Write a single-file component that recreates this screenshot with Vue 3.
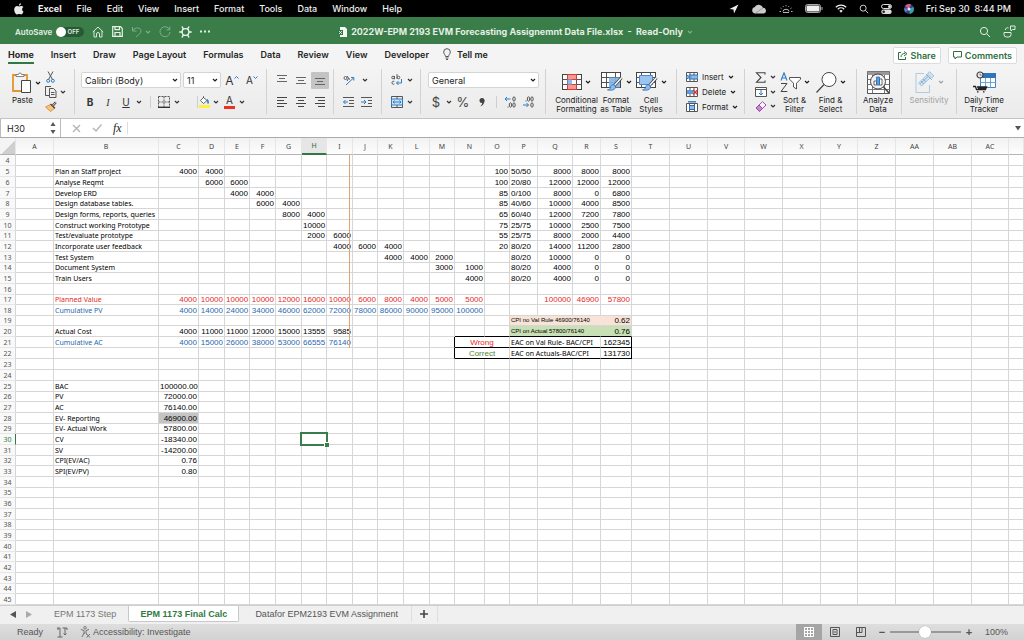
<script setup>
const menus = ['File', 'Edit', 'View', 'Insert', 'Format', 'Tools', 'Data', 'Window', 'Help']
const tabs = ['Home', 'Insert', 'Draw', 'Page Layout', 'Formulas', 'Data', 'Review', 'View', 'Developer']

const columns = [
  ['A', 38], ['B', 105], ['C', 40], ['D', 26], ['E', 25], ['F', 26], ['G', 26], ['H', 25], ['I', 26],
  ['J', 25], ['K', 26], ['L', 26], ['M', 25], ['N', 30], ['O', 25], ['P', 28], ['Q', 35], ['R', 28],
  ['S', 31], ['T', 38], ['U', 38], ['V', 37], ['W', 38], ['X', 38], ['Y', 37], ['Z', 38], ['AA', 38],
  ['AB', 38], ['AC', 37], ['', 0]
].map(([name, width]) => ({ name, width }))

const values = {
  5: { B: 'Plan an Staff project', C: '4000', D: '4000', O: '100', P: '50/50', Q: '8000', R: '8000', S: '8000' },
  6: { B: 'Analyse Reqmt', D: '6000', E: '6000', O: '100', P: '20/80', Q: '12000', R: '12000', S: '12000' },
  7: { B: 'Develop ERD', E: '4000', F: '4000', O: '85', P: '0/100', Q: '8000', R: '0', S: '6800' },
  8: { B: 'Design database tables.', F: '6000', G: '4000', O: '85', P: '40/60', Q: '10000', R: '4000', S: '8500' },
  9: { B: 'Design forms, reports, queries', G: '8000', H: '4000', O: '65', P: '60/40', Q: '12000', R: '7200', S: '7800' },
  10: { B: 'Construct working Prototype', H: '10000', O: '75', P: '25/75', Q: '10000', R: '2500', S: '7500' },
  11: { B: 'Test/evaluate prototype', H: '2000', I: '6000', O: '55', P: '25/75', Q: '8000', R: '2000', S: '4400' },
  12: { B: 'Incorporate user feedback', I: '4000', J: '6000', K: '4000', O: '20', P: '80/20', Q: '14000', R: '11200', S: '2800' },
  13: { B: 'Test System', K: '4000', L: '4000', M: '2000', P: '80/20', Q: '10000', R: '0', S: '0' },
  14: { B: 'Document System', M: '3000', N: '1000', P: '80/20', Q: '4000', R: '0', S: '0' },
  15: { B: 'Train Users', N: '4000', P: '80/20', Q: '4000', R: '0', S: '0' },
  17: { B: 'Planned Value', C: '4000', D: '10000', E: '10000', F: '10000', G: '12000', H: '16000', I: '10000', J: '6000', K: '8000', L: '4000', M: '5000', N: '5000', Q: '100000', R: '46900', S: '57800' },
  18: { B: 'Cumulative PV', C: '4000', D: '14000', E: '24000', F: '34000', G: '46000', H: '62000', I: '72000', J: '78000', K: '86000', L: '90000', M: '95000', N: '100000' },
  19: { P: 'CPI no Val Rule 46900/76140', S: '0.62' },
  20: { B: 'Actual Cost', C: '4000', D: '11000', E: '11000', F: '12000', G: '15000', H: '13555', I: '9585', P: 'CPI on Actual 57800/76140', S: '0.76' },
  21: { B: 'Cumulative AC', C: '4000', D: '15000', E: '26000', F: '38000', G: '53000', H: '66555', I: '76140', N: 'Wrong', P: 'EAC on Val Rule- BAC/CPI', S: '162345' },
  22: { N: 'Correct', P: 'EAC on Actuals-BAC/CPI', S: '131730' },
  25: { B: 'BAC', C: '100000.00' },
  26: { B: 'PV', C: '72000.00' },
  27: { B: 'AC', C: '76140.00' },
  28: { B: 'EV- Reporting', C: '46900.00' },
  29: { B: 'EV- Actual Work', C: '57800.00' },
  30: { B: 'CV', C: '-18340.00' },
  31: { B: 'SV', C: '-14200.00' },
  32: { B: 'CPI(EV/AC)', C: '0.76' },
  33: { B: 'SPI(EV/PV)', C: '0.80' }
}

const spans = {
  19: { P: 3 }, 20: { P: 3 },
  21: { N: 2, P: 3 }, 22: { N: 2, P: 3 }
}
const shortRows = [8, 11, 14, 17, 19, 26, 29, 32, 35, 38, 41, 44]

const rowClass = {
  17: 'red', 18: 'blue', 21: 'boxed', 22: 'boxed', 19: 'peach', 20: 'mint'
}

function cellsOf(n) {
  const out = []
  let i = 0
  while (i < columns.length) {
    const col = columns[i].name
    const span = spans[n]?.[col] ?? 1
    const text = values[n]?.[col] ?? ''
    const verdict = text === 'Wrong' || text === 'Correct'
    const classes = ['c' + (col || 'end')]
    if (text && col !== 'B' && col !== 'P' && !verdict) classes.push('num')
    if (verdict) classes.push('verdict', text.toLowerCase())
    if (n === 21 && i < 9) classes.push('bluecell')
    if (n === 28 && col === 'C') classes.push('shade')
    out.push({ key: col || 'end', text, span, classes })
    i += span
  }
  return out
}

const rows = Array.from({ length: 42 }, (_, k) => {
  const n = k + 4
  return { n, short: shortRows.includes(n), cls: rowClass[n], cells: cellsOf(n) }
})
</script>

<template>
  <div class="app">
    <svg class="defs" aria-hidden="true">
      <symbol id="chev" viewBox="0 0 6 6"><path d="M1 2l2 2 2-2" fill="none" stroke="currentColor" stroke-width="1.2" /></symbol>
      <symbol id="lens" viewBox="0 0 12 12"><circle cx="5" cy="5" r="3.6" fill="none" stroke="currentColor" /><path d="M7.6 7.6L11 11" stroke="currentColor" /></symbol>
      <symbol id="grid" viewBox="0 0 22 18"><rect x=".5" y=".5" width="19" height="15" fill="#fff" stroke="#444" /><path d="M.5 5.500h19M.5 10.500h19M5.500 .5v15M14.500 .5v15" stroke="#555" fill="none" /></symbol>
      <symbol id="brush" viewBox="0 0 16 14"><path d="M14.500 .8L7 9" stroke="#444" stroke-width="3" /><path d="M14.500 .8L7 9" stroke="#fff" stroke-width="1.400" /><path d="M7.500 8c-3-1-4 1-4 3-1 1.500-2 1.800-3 1.800 4 1.200 8 0 8-3z" fill="#8ebcec" stroke="#2a70b8" stroke-width=".8" /></symbol>
    </svg>

    <header class="menubar">
      <svg class="apple" viewBox="0 0 10 12"><path d="M7 .2c.1 1.300-.9 2.400-2.100 2.400C4.800 1.400 5.900.4 7 .2zM9.500 8.700c-.7 1.600-1.500 2.800-2.500 2.800-.7 0-1-.4-1.900-.4s-1.200.4-1.900.4C1.700 11.500.2 8.900.2 6.500.2 4.200 1.700 3 3.100 3c.8 0 1.500.5 2 .5S6.400 3 7.300 3c.9 0 1.600.4 2.100 1.100-1.900 1.200-1.600 3.700.1 4.600z" fill="#e8e8e8" /></svg>
      <nav class="menus"><b>Excel</b><span v-for="m in menus" :key="m">{{ m }}</span></nav>
      <div class="tray">
        <svg width="10" height="10" viewBox="0 0 10 10"><path d="M9.500.5L.5 5l4 .5.5 4z" fill="#eee" /></svg>
        <svg width="16" height="10" viewBox="0 0 16 10"><path d="M4 9.500a3.300 3.300 0 01-.2-6.500A4.500 4.500 0 0112 3.800a2.900 2.900 0 01.8 5.700z" fill="#ccc" /><path d="M4 9.500L12 4" stroke="#888" stroke-width=".7" /></svg>
        <svg width="14" height="8" viewBox="0 0 14 8"><path d="M4 6.500a3 2.200 0 016 0M1.500 3l1 .7M12.500 3l-1 .7M4 1l.5.800M10 1l-.5.800M7 .2v1M.5 6.500h1.500M12 6.500h1.500M4 7.500h6" stroke="#ccc" fill="none" stroke-width=".9" /></svg>
        <svg width="18" height="9" viewBox="0 0 18 9"><rect x=".5" y=".5" width="15" height="8" rx="2" fill="none" stroke="#aaa" /><rect x="1.500" y="1.500" width="13" height="6" rx="1" fill="#eee" /><path d="M17 3v3" stroke="#aaa" /></svg>
        <svg width="12" height="9" viewBox="0 0 12 9"><path d="M.8 3.200a7.500 7.500 0 0110.400 0M2.800 5.200a4.600 4.600 0 016.400 0" fill="none" stroke="#eee" stroke-width="1.300" /><path d="M4.300 6.700L6 8.700l1.700-2a2.600 2.600 0 00-3.400 0z" fill="#eee" /></svg>
        <svg width="10" height="10"><use href="#lens" /></svg>
        <svg width="11" height="10" viewBox="0 0 11 10"><rect x=".5" y=".5" width="10" height="4" rx="2" fill="none" stroke="#ddd" /><circle cx="8.500" cy="2.500" r="1.500" fill="#ddd" /><rect x=".3" y="5.500" width="10.400" height="4.500" rx="2.200" fill="#ddd" /><circle cx="2.700" cy="7.700" r="1.300" fill="#222" /></svg>
        <svg width="10" height="10" viewBox="0 0 10 10"><circle cx="5" cy="5" r="5" fill="#364070" /><path d="M5 5L1 2a5 5 0 016-1.500z" fill="#d25a8a" /><path d="M5 5l4.500-2A5 5 0 016 9.900z" fill="#3aa0a8" /><path d="M5 5L1.500 8.500A5 5 0 01.5 4z" fill="#5878d0" /><circle cx="5" cy="5" r="1.500" fill="#e8e4f4" /></svg>
        <time>Fri Sep 30&nbsp; 8:44 PM</time>
      </div>
    </header>

    <div class="titlebar">
      <div class="quick">
        <label class="auto"><span>AutoSave</span><input type="checkbox" role="switch" /><i>OFF</i></label>
        <button aria-label="Home page"><svg width="12" height="12" viewBox="0 0 12 12"><path d="M.8 6L6 1l5.200 5M2 5v6h2.500V8a1.500 1.500 0 013 0v3H10V5" fill="none" stroke="#d8e8da" /></svg></button>
        <button aria-label="Save"><svg width="11" height="11" viewBox="0 0 11 11"><path d="M.7.7h7.800l1.800 1.800v7.800H.7zM3 .7v3h4.500v-3M3 10.300V6.500h5v3.800" fill="none" stroke="#e8f2e8" stroke-width="1.200" /></svg></button>
        <button class="dim undo" aria-label="Undo"><svg width="12" height="12" viewBox="0 0 12 12"><path d="M1.500 1v4h4M1.800 4.500C4 1 10 1 10 5c0 2.500-3 4-5 6" fill="none" stroke="currentColor" /></svg><svg width="6" height="6"><use href="#chev" /></svg></button>
        <button class="dim" aria-label="Redo"><svg width="12" height="12" viewBox="0 0 12 12"><path d="M10.500 3.500A5 5 0 1011 6M10.800.5v3.300H7.500" fill="none" stroke="currentColor" /></svg></button>
        <button aria-label="Settings"><svg width="13" height="12" viewBox="0 0 13 12"><circle cx="6.500" cy="6" r="3.400" fill="none" stroke="#edf5ed" stroke-width="1.400" /><path d="M3 .5L4.300 3M10 .5L8.700 3M.3 6H3M10 6h2.700M3 11.500L4.300 9M10 11.500L8.700 9" stroke="#edf5ed" stroke-width="1.500" /></svg></button>
        <button aria-label="More"><svg width="10" height="3" viewBox="0 0 10 3"><path d="M0 .5h2v2H0zM4 .5h2v2H4zM8 .5h2v2H8z" fill="#e0eee0" /></svg></button>
      </div>
      <div class="doc">
        <svg width="9" height="10" viewBox="0 0 9 10"><path d="M2 0h5l2 2v8H2z" fill="#f4f8f4" /><rect y="3" width="5" height="5" fill="#2f7a42" /><path d="M1 4l3 3M4 4L1 7" stroke="#fff" stroke-width=".8" /></svg>
        <h1>2022W-EPM 2193 EVM Forecasting Assignemnt Data File.xlsx&nbsp; -&nbsp; Read-Only</h1>
        <svg class="dim" width="6" height="6"><use href="#chev" /></svg>
      </div>
      <div class="quickr">
        <button aria-label="Search"><svg width="12" height="12"><use href="#lens" /></svg></button>
        <button aria-label="Share status"><svg width="13" height="13" viewBox="0 0 13 13"><path d="M1 7.500h7v2a2.500 2.500 0 01-2.500 2.500h-2A2.500 2.500 0 011 9.500zM2.500 5a2 2 0 013-2M7.500 1h4.500v3.500H9.500L8 6V4.500h-.5z" fill="none" stroke="#e0eee0" /></svg></button>
      </div>
    </div>

    <div class="tabrow">
      <nav>
        <button v-for="(t, i) in tabs" :key="t" :class="{ on: i === 0 }">{{ t }}</button>
        <button class="tell"><svg width="8" height="12" viewBox="0 0 8 12"><path d="M2.500 8.500C2.500 7 .7 6 .7 4a3.300 3.300 0 016.600 0c0 2-1.800 3-1.800 4.500zM2.500 10h3M3 11.500h2" fill="none" stroke="#444" stroke-width=".9" /></svg>Tell me</button>
      </nav>
      <div class="actions">
        <button><svg width="10" height="9" viewBox="0 0 10 9"><path d="M3 1.500H.5v7h7V6M3 6c0-2.500 1.500-3.500 4-3.500M6 .5l3 2.200-3 2.300" fill="none" stroke="currentColor" /></svg>Share</button>
        <button><svg width="9" height="9" viewBox="0 0 9 9"><path d="M.5.5h8v5.500H4L2 8V6H.5z" fill="none" stroke="currentColor" /></svg>Comments</button>
      </div>
    </div>

    <div class="ribbon">
      <section class="g clip">
        <button class="paste"><span class="pic"><svg width="20" height="21" viewBox="0 0 20 21"><path d="M4 3H1v16h8M12 3h3v5" fill="none" stroke="#e2962f" stroke-width="1.800" /><path d="M4 4.500V2.500h2.500a1.500 1.500 0 013 0H12v2z" fill="#fff" stroke="#666" stroke-width=".8" /><path d="M9.500 8.500h9v12h-9z" fill="#fff" stroke="#444" /></svg><svg width="6" height="6"><use href="#chev" /></svg></span>Paste</button>
        <div class="stack">
          <button class="ind" aria-label="Cut"><svg width="9" height="12" viewBox="0 0 9 12"><path d="M2 .5l4.500 8M7 .5L2.500 8.500" stroke="#555" fill="none" /><circle cx="2.200" cy="9.800" r="1.500" fill="none" stroke="#2e7cc4" /><circle cx="6.800" cy="9.800" r="1.500" fill="none" stroke="#2e7cc4" /></svg></button>
          <button aria-label="Copy"><svg width="12" height="12" viewBox="0 0 12 12"><path d="M4 9.500H.5v-9H6M4.500 2.500h4L11 5v6.500H4.500zM6 6.500h3.500M6 8.500h3.500" fill="none" stroke="#444" stroke-width=".9" /></svg><svg width="6" height="6"><use href="#chev" /></svg></button>
          <button aria-label="Format painter"><svg width="12" height="11" viewBox="0 0 12 11"><path d="M5.500 3.500l4 4-4 3-5-4.500z" fill="#f6c27c" stroke="#d8862b" stroke-width=".8" /><path d="M5.500 3l4.500 4.300" stroke="#444" stroke-width="1.200" /><path d="M7.500 5L10.800 1.200" stroke="#444" stroke-width="2.400" /><path d="M7.800 4.700l2.700-3.200" stroke="#fff" stroke-width=".8" /></svg></button>
        </div>
      </section>

      <section class="g font">
        <div class="r top">
          <label class="sel wide"><select aria-label="Font"><option>Calibri (Body)</option></select><svg width="6" height="6"><use href="#chev" /></svg></label>
          <label class="sel"><select aria-label="Font size"><option>11</option></select><svg width="6" height="6"><use href="#chev" /></svg></label>
          <button class="big" aria-label="Grow font">A<svg width="5" height="10" viewBox="0 0 5 10"><path d="M.5 3.500l2-2 2 2" fill="none" stroke="#2e7cc4" /></svg></button>
          <button class="small" aria-label="Shrink font">A<svg width="5" height="10" viewBox="0 0 5 10"><path d="M.5 1.500l2 2 2-2" fill="none" stroke="#2e7cc4" /></svg></button>
        </div>
        <div class="r low">
          <button><b>B</b></button><button class="it">I</button><button class="un">U</button>
          <svg width="6" height="6"><use href="#chev" /></svg><i class="bar"></i>
          <button aria-label="Borders"><svg width="12" height="12" viewBox="0 0 12 12"><path d="M.5.5h11v10.500M.5.5v10.500M6 .5v10.500M.5 6h11" fill="none" stroke="#555" stroke-dasharray="2 1" /><path d="M0 11.300h12" stroke="#333" stroke-width="1.400" /></svg></button>
          <svg width="6" height="6"><use href="#chev" /></svg><i class="bar end"></i>
          <button aria-label="Fill colour"><svg width="11" height="12" viewBox="0 0 11 12"><path d="M5 1L1.500 4.500l3 3L8 4.500 4.500 1.500V.2" fill="#fff" stroke="#444" stroke-width=".8" /><path d="M8.500 3.500c1 2 1 3 .5 4z" fill="#2e7cc4" stroke="#2e7cc4" /><path d="M0 9h11v3H0z" fill="#fff03c" /></svg></button>
          <svg width="6" height="6"><use href="#chev" /></svg>
          <button class="acol" aria-label="Font colour">A</button>
          <svg width="6" height="6"><use href="#chev" /></svg>
        </div>
      </section>

      <section class="g align">
        <div class="r"><button v-for="k in 3" :key="k" :class="{ on: k === 3 }" :aria-label="'Vertical align ' + k"><svg width="10" height="10" viewBox="0 0 10 10"><path :d="['M0 .5h10M2 3.500h6M0 6.500h10', 'M0 2.500h10M2 5.500h6M0 8.500h10', 'M0 3.500h10M2 6.500h6M0 9.500h10'][k - 1]" stroke="#666" /></svg></button></div>
        <div class="r"><button v-for="k in 3" :key="k" :aria-label="'Horizontal align ' + k"><svg width="10" height="10" viewBox="0 0 10 10"><path :d="['M0 .5h10M0 3.500h7M0 6.500h10M0 9.500h7', 'M0 .5h10M2 3.500h6M0 6.500h10M2 9.500h6', 'M0 .5h10M3 3.500h7M0 6.500h10M3 9.500h7'][k - 1]" stroke="#444" /></svg></button></div>
      </section>

      <section class="g orient">
        <div class="r"><button aria-label="Orientation"><svg width="12" height="11" viewBox="0 0 12 11"><circle cx="2.500" cy="3" r="1.500" fill="none" stroke="#555" stroke-width=".9" /><path d="M4 1l2.500 3.500M4.500 6a1.500 1.500 0 012-2" fill="none" stroke="#555" /><path d="M3 10L10.500 3M8 2.500h2.800v3" fill="none" stroke="#2e7cc4" /></svg></button><svg width="6" height="6"><use href="#chev" /></svg></div>
        <div class="r"><button aria-label="Decrease indent"><svg width="11" height="10" viewBox="0 0 11 10"><path d="M0 .5h11M6 3.500h5M6 6.500h5M0 9.500h11" stroke="#555" /><path d="M5 5H.5M2.500 3L.5 5l2 2" fill="none" stroke="#2e7cc4" /></svg></button><button aria-label="Increase indent"><svg width="11" height="10" viewBox="0 0 11 10"><path d="M0 .5h11M7 3.500h4M7 6.500h4M0 9.500h11" stroke="#555" /><path d="M0 5h5M3 3l2 2-2 2" fill="none" stroke="#2e7cc4" /></svg></button></div>
      </section>

      <section class="g wrap">
        <div class="r"><button aria-label="Wrap text"><svg width="12" height="12" viewBox="0 0 12 12"><circle cx="2" cy="3.500" r="1.300" fill="none" stroke="#555" stroke-width=".9" /><path d="M3.500 2v3.300M6 0v5" stroke="#555" stroke-width=".9" /><circle cx="7.500" cy="3.500" r="1.300" fill="none" stroke="#555" stroke-width=".9" /><path d="M3.300 7.500a1.500 1.500 0 100 2.500" fill="none" stroke="#555" /><path d="M10.500 5v4H5.500M7.500 7L5.500 9l2 2" fill="none" stroke="#2e7cc4" /></svg></button><svg width="6" height="6"><use href="#chev" /></svg></div>
        <div class="r"><button aria-label="Merge cells"><svg width="12" height="12" viewBox="0 0 12 12"><path d="M.5.5h11v11H.5zM6 .5v2.500M6 9v2.500" fill="none" stroke="#555" /><rect x=".5" y="3" width="11" height="6" fill="#cfe2f5" stroke="#2e7cc4" /><path d="M2 6h8M3.500 4.500L2 6l1.500 1.500M8.500 4.500L10 6 8.500 7.500" fill="none" stroke="#2e7cc4" /></svg></button><svg width="6" height="6"><use href="#chev" /></svg></div>
      </section>

      <section class="g number">
        <div class="r"><label class="sel full"><select aria-label="Number format"><option>General</option></select><svg width="6" height="6"><use href="#chev" /></svg></label></div>
        <div class="r fmt">
          <button class="sym">$</button><svg width="6" height="6"><use href="#chev" /></svg><button class="sym">%</button>
          <button aria-label="Comma style"><svg width="6" height="9" viewBox="0 0 6 9"><circle cx="3" cy="2.500" r="2.500" fill="#444" /><path d="M5.300 2c.4 3-1 5.500-4 6.500 1.500-1.500 2-3 2-5z" fill="#444" /></svg></button><i class="bar"></i>
          <button aria-label="Increase decimal"><svg width="11" height="12" viewBox="0 0 11 12"><path d="M0 3h5.500M2 1L0 3l2 2" fill="none" stroke="#2e7cc4" /><g fill="none" stroke="#555"><ellipse cx="9" cy="3" rx="1.200" ry="2.200" /><ellipse cx="5.500" cy="9" rx="1.200" ry="2.200" /><ellipse cx="9" cy="9" rx="1.200" ry="2.200" /></g><path d="M2.500 11h1" stroke="#555" /></svg></button>
          <button aria-label="Decrease decimal"><svg width="11" height="12" viewBox="0 0 11 12"><path d="M0 9h5.500M3.500 7l2 2-2 2" fill="none" stroke="#2e7cc4" /><g fill="none" stroke="#555"><ellipse cx="9" cy="9" rx="1.200" ry="2.200" /><ellipse cx="5.500" cy="3" rx="1.200" ry="2.200" /><ellipse cx="9" cy="3" rx="1.200" ry="2.200" /></g><path d="M2.500 5h1" stroke="#555" /></svg></button>
        </div>
      </section>

      <section class="g styles">
        <button class="tile"><span class="pic"><svg width="20" height="17" viewBox="0 0 20 17"><use href="#grid" width="22" height="18" /><path d="M5.500 .5h9v5h-9zM5.500 10.500h9v5h-9z" fill="#f19a96" stroke="#d93a32" /><path d="M5.500 5.500h4.500v5h-4.500z" fill="#8ebcec" /></svg><svg width="6" height="6"><use href="#chev" /></svg></span>Conditional<br>Formatting</button>
        <button class="tile"><span class="pic"><svg width="22" height="20" viewBox="0 0 22 20"><use href="#grid" width="22" height="18" /><path d="M8 5.500h11v10H8z" fill="#7fb2e8" opacity=".9" /><use href="#brush" x="6" y="5" width="16" height="14" /></svg><svg width="6" height="6"><use href="#chev" /></svg></span>Format<br>as Table</button>
        <button class="tile"><span class="pic"><svg width="22" height="20" viewBox="0 0 22 20"><use href="#grid" width="22" height="18" /><path d="M3.500 3.500h13v9h-13z" fill="#9cc4ee" stroke="#4b8ace" /><use href="#brush" x="6" y="5" width="16" height="14" /></svg><svg width="6" height="6"><use href="#chev" /></svg></span>Cell<br>Styles</button>
      </section>

      <section class="g cells">
        <button><svg width="12" height="10" viewBox="0 0 12 10"><path d="M.5.5h11v9H.5zM4 .5v9M8 .5v9" fill="#fff" stroke="#555" /><path d="M3 3h9v4H3z" fill="#8ebcec" stroke="#2e6cae" /><path d="M5.500 5H0M2 3L0 5l2 2" fill="none" stroke="#2e7cc4" /></svg><span>Insert</span><svg width="6" height="6"><use href="#chev" /></svg></button>
        <button><svg width="12" height="10" viewBox="0 0 12 10"><path d="M.5.5h11v9H.5zM4 .5v9M8 .5v9" fill="#fff" stroke="#555" /><path d="M1 3h6v4H1z" fill="#5c9bdc" /><path d="M7 3l4.500 4.500M11.500 3L7 7.500" stroke="#d9302b" stroke-width="1.200" /></svg><span>Delete</span><svg width="6" height="6"><use href="#chev" /></svg></button>
        <button><svg width="12" height="11" viewBox="0 0 12 11"><path d="M.5 2.500h11v8H.5zM3.500 2v9M8.500 2v9" fill="#fff" stroke="#555" /><path d="M3.500 4.500h5v4h-5z" fill="#8ebcec" stroke="#2e6cae" /><path d="M2 .8h8" stroke="#2e7cc4" stroke-width="1.400" /></svg><span>Format</span><svg width="6" height="6"><use href="#chev" /></svg></button>
      </section>

      <section class="g edit">
        <div class="stack">
          <button aria-label="AutoSum"><svg width="12" height="11" viewBox="0 0 12 11"><path d="M10 2.500V.8H1.500l4.500 4.700-4.500 4.800H10V8.500" fill="none" stroke="#444" stroke-width="1.100" /></svg><svg width="6" height="6"><use href="#chev" /></svg></button>
          <button aria-label="Fill"><svg width="12" height="10" viewBox="0 0 12 10"><path d="M.5.500h11v9H.5zM.5 2.500h11" fill="#fff" stroke="#555" /><path d="M6 3v5M4 6l2 2 2-2" fill="none" stroke="#2e7cc4" /></svg><svg width="6" height="6"><use href="#chev" /></svg></button>
          <button aria-label="Clear"><svg width="12" height="11" viewBox="0 0 12 11"><path d="M1 7l6.500-6.300L11 4l-6.500 6.300z" fill="#fff" stroke="#a044ac" /><path d="M1 7l3-3 3.500 3.500-3 2.800z" fill="#c98ad0" stroke="#a044ac" /></svg><svg width="6" height="6"><use href="#chev" /></svg></button>
        </div>
        <button class="tile"><span class="pic"><svg width="21" height="21" viewBox="0 0 21 21"><path d="M1 8.500L4 .8l3 7.700M2 6h4" fill="none" stroke="#2e7cc4" stroke-width="1.100" /><path d="M1 11.500h6L1 19.500h6.300" fill="none" stroke="#444" /><path d="M9.500 5.500h11v1.700l-4 4V17l-3-2v-3.800l-4-4z" fill="#fff" stroke="#555" /></svg><svg width="6" height="6"><use href="#chev" /></svg></span>Sort &amp;<br>Filter</button>
        <button class="tile"><span class="pic"><svg width="21" height="21" viewBox="0 0 21 21"><circle cx="13" cy="7.500" r="7" fill="#fff" stroke="#444" /><path d="M8 12.500L.5 20.500" stroke="#444" stroke-width="1.200" /></svg><svg width="6" height="6"><use href="#chev" /></svg></span>Find &amp;<br>Select</button>
      </section>

      <section class="g one">
        <button class="tile"><span class="pic"><svg width="23" height="23" viewBox="0 0 23 23"><path d="M.5.500h22v22H.5z" fill="#fff" stroke="#555" /><path d="M.5.500h22v3.500H.5z" fill="#999" /><path d="M.5 8.500h22M.5 13.500h22M.5 18.500h22M5.500 4v18M17.500 4v18" stroke="#777" /><circle cx="11" cy="10.500" r="7.500" fill="#f2f2f2" stroke="#444" /><path d="M16.500 16l5.500 6" stroke="#444" stroke-width="1.500" /><path d="M7 10h2.500v4H7zM12.500 8h2.500v6h-2.500z" fill="#fff" stroke="#444" stroke-width=".8" /><path d="M9.500 6h3v8h-3z" fill="#5c9bdc" stroke="#2e6cae" stroke-width=".8" /></svg></span>Analyze<br>Data</button>
      </section>
      <section class="g sens">
        <button class="tile faded"><span class="pic"><svg width="20" height="22" viewBox="0 0 20 22"><path d="M9 2.500H1v19h13.500V14" fill="none" stroke="#a9cbe6" /><g fill="#cfe2f2" stroke="#a3c5e0"><path d="M3.500 12L12 4l3 3-8.500 8z" /><path d="M12.500 3l2-2.500L19 5l-2.500 2z" /></g><path d="M5 13l8-7.500M11 3l6 6M6 10l3 3M8 8l3 3" stroke="#8db4d4" /></svg><svg width="6" height="6"><use href="#chev" /></svg></span>Sensitivity</button>
      </section>
      <section class="g daily">
        <button class="tile"><span class="pic"><svg width="23" height="22" viewBox="0 0 23 22"><path d="M7.500 2.500h15v14h-15z" fill="#fff" stroke="#3d84c6" /><path d="M7 2h16v5H7z" fill="#2f75b8" /><path d="M7.500 11.500h15M12.500 7v9.500M17.500 7v9.500" stroke="#6ea5d8" /><circle cx="7" cy="4" r="3" fill="#eee" stroke="#444" stroke-width="1.200" /><path d="M7 2.500V4.200h1.500" fill="none" stroke="#444" stroke-width=".7" /><path d="M0 15.500h2.500l1 3h9l1-2.500H4M4 20.800h1.500M10 20.800h1.500M5 17.500h8M5 16.800h7" stroke="#222" stroke-width="1.300" fill="none" /></svg></span>Daily Time<br>Tracker</button>
      </section>
    </div>

    <div class="formula">
      <label class="name"><input value="H30" aria-label="Name box" /><svg width="6" height="12" viewBox="0 0 6 12"><path d="M3 0l2.500 4h-5zM3 12L.5 8h5z" fill="#555" /></svg></label>
      <button aria-label="Cancel"><svg width="9" height="9" viewBox="0 0 9 9"><path d="M1 1l7 7M8 1L1 8" stroke="#b5b5b5" stroke-width="1.400" /></svg></button>
      <button aria-label="Enter"><svg width="10" height="8" viewBox="0 0 10 8"><path d="M1 4l3 3 5.500-6.500" fill="none" stroke="#b5b5b5" stroke-width="1.400" /></svg></button>
      <button class="fx">fx</button>
      <input class="entry" aria-label="Formula bar" />
      <svg width="6" height="6" viewBox="0 0 6 6"><path d="M0 1h6L3 5.500z" fill="#555" /></svg>
    </div>

    <main class="sheet">
      <table>
        <colgroup><col class="rh"><col v-for="c in columns" :key="c.name" :style="c.width ? { width: c.width + 'px' } : null"></colgroup>
        <thead><tr><th class="corner"></th><th v-for="c in columns" :key="c.name" :class="{ cur: c.name === 'H' }">{{ c.name }}</th></tr></thead>
        <tbody>
          <tr v-for="r in rows" :key="r.n" :class="[r.cls, { short: r.short }]">
            <th :class="{ cur: r.n === 30 }">{{ r.n }}</th>
            <td v-for="c in r.cells" :key="c.key" :class="c.classes" :colspan="c.span">{{ c.text }}<i v-if="r.n === 4 && c.key === 'I'" class="mark"></i><i v-if="r.n === 30 && c.key === 'H'" class="cursor"></i></td>
          </tr>
        </tbody>
      </table>
    </main>

    <nav class="sheets">
      <button class="arrow" aria-label="Previous sheet"><svg width="6" height="7" viewBox="0 0 6 7"><path d="M6 0v7L0 3.500z" fill="#555" /></svg></button>
      <button class="arrow" aria-label="Next sheet"><svg width="6" height="7" viewBox="0 0 6 7"><path d="M0 0v7l6-3.500z" fill="#aaa" /></svg></button>
      <button class="sh first">EPM 1173 Step</button>
      <button class="sh on">EPM 1173 Final Calc</button>
      <button class="sh long">Datafor EPM2193 EVM Assignment</button>
      <button class="plus" aria-label="Add sheet"><svg width="8" height="8" viewBox="0 0 8 8"><path d="M4 0v8M0 4h8" stroke="#444" stroke-width="1.600" /></svg></button>
    </nav>

    <footer class="status">
      <span>Ready</span>
      <svg width="12" height="11" viewBox="0 0 12 11"><path d="M1 1h3v9M1.500 10h5M6.500 1H11v2M9 1v7M7.500 6.500L9 8l1.500-1.500M2 1v2" fill="none" stroke="#666" /></svg>
      <svg class="acc" width="11" height="12" viewBox="0 0 11 12"><circle cx="5" cy="1.800" r="1.300" fill="none" stroke="#666" stroke-width=".8" /><path d="M.8 3.500l3.200 1v2.500L2 11M9 3.500L6 4.500V7l1 1.500M4 7.500l1-.5M6.500 8l3.500 3.500M10 8l-3.500 3.500" fill="none" stroke="#666" stroke-width=".9" /></svg>
      <span>Accessibility: Investigate</span>
      <div class="views">
        <button class="on" aria-label="Normal view"><svg width="10" height="10" viewBox="0 0 10 10"><path d="M.5.500h9v9H.5zM.5 3.500h9M.5 6.500h9M3.500.500v9M6.500.500v9" fill="none" stroke="#fff" /></svg></button>
        <button aria-label="Page layout view"><svg width="10" height="10" viewBox="0 0 10 10"><path d="M.5.500h9v9H.5zM3 2.500h4v5H3zM5 4v2" fill="none" stroke="#555" /></svg></button>
        <button aria-label="Page break view"><svg width="10" height="10" viewBox="0 0 10 10"><path d="M.5.500h9v9H.5zM.5 5.500h5.500v-5M3.500.5v5" fill="none" stroke="#555" /></svg></button>
        <b>−</b><input type="range" min="0" max="100" value="50" aria-label="Zoom" /><b>+</b>
        <span class="pct">100%</span>
      </div>
    </footer>
  </div>
</template>

<style>
html, body { margin: 0; background: #fff; }
</style>

<style scoped>
.app { display: flex; flex-direction: column; height: 100vh; overflow: hidden; font-family: Inter, "Liberation Sans", sans-serif; font-size: 9px; color: #262626; background: #fff; }
.app * { box-sizing: border-box; }
.defs { position: absolute; width: 0; height: 0; }
svg { display: block; flex: none; }
button { display: flex; align-items: center; justify-content: center; border: 0; background: none; padding: 0; margin: 0; font: inherit; color: inherit; white-space: nowrap; }
input, select { font: inherit; color: inherit; margin: 0; border: 0; }

.menubar { display: flex; align-items: center; height: 17px; flex: none; background: #000; color: #f0f0f0; padding: 0 13px 0 14px; }
.apple { width: 10px; height: 12px; margin-right: 14px; }
.menus { display: flex; gap: 15px; font-weight: 500; }
.menus b { font-weight: 700; }
.tray { display: flex; align-items: center; gap: 12px; margin-left: auto; font-weight: 500; white-space: nowrap; }

.titlebar { display: grid; grid-template-columns: 1fr auto 1fr; align-items: center; height: 27px; flex: none; background: #3a7d48; color: #e4efe5; padding: 2px 8px 0 15px; }
.quick { display: flex; align-items: center; gap: 8px; }
.quickr { display: flex; align-items: center; gap: 12px; justify-content: flex-end; }
.dim { color: #7fae88; }
.undo { gap: 2px; }
.auto { position: relative; display: flex; align-items: center; gap: 4px; font-size: 8px; font-weight: 600; }
.auto input { appearance: none; width: 28px; height: 10px; border-radius: 5px; background: #275a34; }
.auto input::before { content: ""; display: block; width: 10px; height: 10px; border-radius: 50%; background: #fff; }
.auto i { position: absolute; right: 5px; font-style: normal; font-size: 6px; }
.doc { display: flex; align-items: center; gap: 4px; }
.doc h1 { margin: 0; font-size: 9px; font-weight: 700; white-space: nowrap; }

.tabrow { display: flex; align-items: flex-start; justify-content: space-between; height: 22px; flex: none; background: #f4f4f4; padding: 0 7px 0 8px; }
.tabrow nav { display: flex; gap: 17px; }
.tabrow nav button { height: 20px; padding-top: 2px; font-weight: 600; border-bottom: 2px solid transparent; }
.tabrow nav .on { font-weight: 700; border-bottom-color: #2f7a42; }
.tabrow nav .tell { gap: 6px; margin-left: -3px; }
.actions { display: flex; gap: 7px; padding-top: 3px; }
.actions button { gap: 3px; height: 17px; padding: 0 4px; background: #fff; border: 1px solid #dcdcdc; border-radius: 2px; color: #2f7040; font-weight: 600; }

.ribbon { display: flex; height: 53px; flex: none; background: linear-gradient(#f4f4f4, #ebebeb); border-bottom: 1px solid #c4c4c4; padding-top: 3px; font-size: 8px; color: #333; }
.g { position: relative; flex: none; height: 45px; border-right: 1px solid #d2d2d2; }
.g .r { display: flex; align-items: center; height: 22px; }
.stack { display: flex; flex-direction: column; justify-content: space-between; padding: 1px 0; height: 45px; }
.stack button { height: 14px; justify-content: flex-start; gap: 3px; }
.stack .ind { padding-left: 1px; }
.clip { width: 75px; display: flex; gap: 5px; padding-left: 12px; }
.paste { flex-direction: column; align-items: flex-start; justify-content: flex-start; gap: 3px; padding-top: 3px; width: 28px; line-height: 9px; color: #1c1c1c; }
.pic { display: flex; align-items: center; gap: 3px; }
.font { width: 192px; padding-left: 6px; }
.font .top { gap: 2px; }
.sel { position: relative; display: flex; width: 38px; height: 16px; background: #fff; border: 1px solid #d4d4d4; border-radius: 2px; font-size: 9px; color: #1c1c1c; }
.sel select { appearance: none; width: 100%; background: none; padding: 0 0 0 3px; outline: 0; }
.sel svg { position: absolute; right: 2px; top: 4px; }
.sel.wide { width: 100px; }
.sel.full { width: 111px; }
.big, .small { width: 18px; font-size: 12px; }
.small { font-size: 10px; }
.low { display: grid !important; grid-template-columns: 18px 18px 18px 8px 14px 14px 12px 15px 12px 12px 15px 10px; justify-items: center; font-size: 10px; }
.it { font-family: "Liberation Serif", serif; font-style: italic; }
.un { text-decoration: underline; }
.bar { width: 1px; height: 12px; background: #cfcfcf; }
.bar.end { justify-self: end; }
.acol { width: 11px; height: 13px; line-height: 10px; padding-bottom: 1px; border-bottom: 3px solid #ea3323; }
.align { width: 67px; padding-left: 6px; }
.align .r button { width: 18px; height: 17px; margin-right: 1px; border-radius: 1px; }
.align .on { background: #c4c4c4; }
.orient { width: 48px; padding-left: 9px; }
.orient .r { gap: 7px; }
.wrap { width: 39px; padding-left: 9px; }
.wrap .r { gap: 4px; }
.number { width: 125px; padding-left: 7px; }
.fmt { display: grid !important; grid-template-columns: 16px 10px 18px 20px 8px 20px 16px; justify-items: center; }
.sym { font-size: 13px; color: #444; }
.styles { width: 131px; display: flex; padding-left: 9px; }
.tile { flex-direction: column; justify-content: flex-start; line-height: 9px; padding-top: 1px; color: #1c1c1c; text-align: center; width: 38px; flex: none; }
.tile .pic { height: 24px; margin-bottom: 2px; }
.styles .tile { width: 36px; }
.styles .tile:first-child { width: 43px; }
.styles .tile:last-child { width: 34px; }
.cells { width: 68px; display: flex; flex-direction: column; justify-content: space-between; padding-left: 9px; }
.cells button { height: 15px; gap: 4px; justify-content: flex-start; color: #1c1c1c; }
.edit { width: 112px; display: flex; padding-left: 10px; gap: 1px; }
.edit .tile { width: 35px; }
.one { width: 45px; padding-left: 2px; }
.sens { width: 55px; padding-left: 8px; }
.tile.faded { color: #a0a0a0; }
.daily { border-right: 0; padding-left: 8px; }

.formula { display: flex; align-items: center; height: 19px; flex: none; background: #fff; border-bottom: 1px solid #ababab; padding-right: 3px; gap: 11px; }
.name { display: flex; align-items: center; width: 61px; height: 18px; padding: 0 4px 0 6px; border-right: 1px solid #bbb; border-left: 1px solid #bbb; }
.name input { width: 100%; background: none; padding: 0; outline: 0; }
.fx { font-family: "Liberation Serif", serif; font-style: italic; font-size: 12px; }
.entry { flex: 1; height: 12px; border-left: 1px solid #ddd; outline: 0; margin-left: -6px; }

.sheet { flex: 1; min-height: 0; overflow: hidden; font-family: "Noto Sans", sans-serif; }
table { table-layout: fixed; width: 100%; border-collapse: separate; border-spacing: 0; font-size: 7px; color: #000; }
.rh { width: 16px; }
th, td { padding: 0; border-right: 1px solid #d6d6d6; border-bottom: 1px solid #d6d6d6; height: 11px; line-height: 9px; font-weight: 400; white-space: nowrap; overflow: visible; }
thead th { height: 17px; background: linear-gradient(#f2f2f2, #fdfdfd); border-right-color: #e6e6e6; border-bottom-color: #b4b4b4; color: #444; }
thead .cur { background: #e6e6e6; color: #1f6b37; border-bottom: 2px solid #2f7a42; }
.corner { background: linear-gradient(135deg, #f4f4f4 55%, #cfcfcf 55%); }
tbody th { background: #f9f9f9; color: #555; text-align: center; border-bottom-color: #e6e6e6; }
tbody .cur { color: #2f7a42; border-right: 1px solid #2f7a42; }
.short th, .short td { height: 10px; }
td { padding: 0 1px; position: relative; }
td.num { text-align: right; font-family: "Liberation Sans", sans-serif; font-size: 8px; }
.cP { font-family: "Liberation Sans", sans-serif; font-size: 8px; }
.red td { color: #e8281c; }
.blue td, td.bluecell { color: #1f68b4; }
.peach .cP, .peach .cS { background: #f8e4d7; }
.mint .cP, .mint .cS { background: #c9dfb6; }
.peach .cP, .mint .cP { font-size: 6px; border-right-color: transparent; }
.boxed .cP { font-family: "Noto Sans", sans-serif; font-size: 7px; }
.boxed .cN, .boxed .cP, .boxed .cS, .mint .cN, .mint .cO, .mint .cP, .mint .cS { border-bottom-color: #000; }
.boxed .cS, .boxed .cM { border-right-color: #000; }
td.verdict { text-align: center; font-family: "Liberation Sans", sans-serif; font-size: 8px; }
.wrong { color: #e8281c; }
.correct { color: #4f7f35; }
.shade { background: #c4c4c4; }
.mark { position: absolute; right: 2px; top: 0; width: 1px; height: 193px; background: #dfa27c; z-index: 1; }
.cursor { position: absolute; inset: -2px; border: 2px solid #3a7d48; z-index: 1; }
.cursor::after { content: ""; position: absolute; right: -3px; bottom: -3px; width: 4px; height: 4px; background: #3a7d48; border: 1px solid #fff; border-width: 1px 0 0 1px; }

.sheets { display: flex; align-items: stretch; height: 19px; flex: none; background: #f0f0f0; border-top: 1px solid #cfcfcf; font-family: "Liberation Sans", sans-serif; color: #555; padding: 0 0 2px 10px; }
.arrow { width: 6px; margin-right: 10px; }
.sh { padding: 0 12px; }
.sh.first { color: #777; }
.sh.on { width: 111px; background: #fff; color: #2f7a42; font-weight: 700; border: 1px solid #c8c8c8; border-top: 0; border-radius: 0 0 2px 2px; }
.sh.long { padding: 0 13px 0 16px; }
.plus { width: 27px; border: solid #dedede; border-width: 0 1px; }

.status { display: flex; align-items: center; height: 16px; flex: none; background: linear-gradient(#dedede, #d2d2d2); font-family: "Liberation Sans", sans-serif; color: #555; padding: 0 16px 0 17px; }
.status > svg { margin-left: 13px; }
.status > .acc { margin: 0 2px 0 12px; }
.views { display: flex; align-items: center; margin-left: auto; height: 16px; }
.views button { width: 26px; height: 16px; }
.views .on { background: #a5a5a5; }
.views b { font-size: 11px; width: 10px; text-align: center; margin: 0 3px; }
.views input { appearance: none; width: 71px; height: 12px; background: linear-gradient(#999, #999) center / 100% 2px no-repeat; }
.views input::-webkit-slider-thumb { appearance: none; width: 12px; height: 12px; border-radius: 50%; background: #fff; box-shadow: 0 0 1px #888; }
.pct { margin-left: 8px; }
</style>
